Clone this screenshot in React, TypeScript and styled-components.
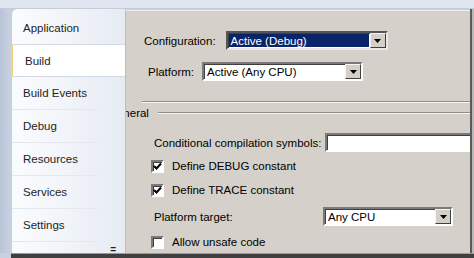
import React from "react";
import styled, { createGlobalStyle } from "styled-components";

const GlobalStyle = createGlobalStyle`
  html, body {
    margin: 0;
    padding: 0;
    background: #c8d1e0;
  }
`;

const tabs = [
  "Application",
  "Build",
  "Build Events",
  "Debug",
  "Resources",
  "Services",
  "Settings",
];

const DropArrow = () => (
  <svg width="7" height="4" viewBox="0 0 7 4">
    <path d="M0 0h7L3.5 4z" fill="#000" />
  </svg>
);

const Combo: React.FC<{ value: string; width: number; selected?: boolean }> = ({
  value,
  width,
  selected,
}) => (
  <ComboBox $focused={selected} style={{ width }}>
    <ComboText $selected={selected}>{value}</ComboText>
    <ComboButton>
      <DropArrow />
    </ComboButton>
  </ComboBox>
);

const Check: React.FC<{ checked?: boolean; label: string }> = ({ checked, label }) => (
  <CheckRow>
    <CheckBox>
      {checked && (
        <svg width="9" height="9" viewBox="0 0 9 9">
          <path d="M1 4l2.5 2.5L8 1.5" stroke="#000" strokeWidth="2" fill="none" />
        </svg>
      )}
    </CheckBox>
    <Label>{label}</Label>
  </CheckRow>
);

export default function App() {
  return (
    <>
      <GlobalStyle />
      <Frame>
        <TopBand />
        <Body>
          <LeftGutter />
          <Sidebar>
            {tabs.map((t) => (
              <Tab key={t} $active={t === "Build"}>
                {t}
              </Tab>
            ))}
            <Grip>=</Grip>
          </Sidebar>
          <Content>
            <ConfigRow>
              <Label>Configuration:</Label>
              <Combo value="Active (Debug)" width={162} selected />
            </ConfigRow>
            <PlatformRow>
              <Label>Platform:</Label>
              <Combo value="Active (Any CPU)" width={161} />
            </PlatformRow>
            <Groove />
            <SectionHeader>
              <SectionTitle>General</SectionTitle>
              <SectionLine />
            </SectionHeader>
            <FieldRow>
              <Label>Conditional compilation symbols:</Label>
              <TextBox />
            </FieldRow>
            <Check checked label="Define DEBUG constant" />
            <Check checked label="Define TRACE constant" />
            <TargetRow>
              <Label>Platform target:</Label>
              <Combo value="Any CPU" width={130} />
            </TargetRow>
            <Check label="Allow unsafe code" />
          </Content>
          <RightGutter />
        </Body>
        <BottomBar />
      </Frame>
    </>
  );
}

const Frame = styled.div`
  width: 474px;
  height: 258px;
  display: flex;
  flex-direction: column;
  overflow: hidden;
  background: #c8d1e0;
  font-family: "Liberation Sans", Arial, sans-serif;
  font-size: 11.5px;
  color: #000;
`;

const TopBand = styled.div`
  height: 8px;
  flex: none;
  background: #dfe5ef;
  border-bottom: 1px solid #c4ccd9;
`;

const Body = styled.div`
  flex: 1;
  display: flex;
  min-height: 0;
`;

const LeftGutter = styled.div`
  width: 11px;
  flex: none;
  background: linear-gradient(to right, #b7c3d7, #c9d2e1);
`;

const Sidebar = styled.div`
  width: 113px;
  flex: none;
  position: relative;
  padding-top: 3px;
  border-top-left-radius: 6px;
  border-left: 1px solid #c6cdd8;
  background: linear-gradient(to right, #fbfcfe, #e6ebf3);
  display: flex;
  flex-direction: column;
`;

const Tab = styled.div<{ $active?: boolean }>`
  height: 33px;
  flex: none;
  display: flex;
  align-items: center;
  padding-left: 11px;
  box-sizing: border-box;
  color: #1e1e1e;
  font-size: 11.5px;
  border-bottom: 1px solid #e3e7ee;
  margin-right: 28px;
  ${(p) =>
    p.$active &&
    `
    background: #ffffff;
    margin-right: 0;
    margin-left: -1px;
    padding-left: 12px;
    border-left: 2px solid #f2d27a;
    border-top: 1px solid #d3d9e2;
    border-bottom: 1px solid #d3d9e2;
    margin-top: -1px;
  `}
`;

const Grip = styled.div`
  position: absolute;
  right: 9px;
  bottom: -1px;
  font-size: 10px;
  font-weight: bold;
  line-height: 8px;
  color: #222;
`;

const Content = styled.div`
  flex: 1;
  margin-top: 1px;
  background: #d5d1ca;
  border-left: 1px solid #b8bcc4;
  border-top: 1px solid #eeeeee;
  overflow: hidden;
  display: flex;
  flex-direction: column;
  & > * {
    flex: none;
  }
`;

const RightGutter = styled.div`
  width: 4px;
  flex: none;
  background: linear-gradient(to right, #5a5a5a 0 2px, #b9b9b9 2px);
`;

const BottomBar = styled.div`
  height: 5px;
  flex: none;
  margin-left: 11px;
  background: linear-gradient(#9a9a9a 0 1px, #3f3f3f 1px);
`;

const Label = styled.span`
  white-space: nowrap;
`;

const ConfigRow = styled.div`
  display: flex;
  align-items: center;
  margin-top: 20px;
  padding-left: 18px;
  gap: 10px;
`;

const PlatformRow = styled(ConfigRow)`
  margin-top: 12px;
  padding-left: 22px;
  gap: 8px;
`;

const ComboBox = styled.div<{ $focused?: boolean }>`
  height: 19px;
  box-sizing: border-box;
  display: flex;
  align-items: stretch;
  background: #fff;
  border: 2px solid;
  border-color: ${(p) =>
    p.$focused ? "#555 #e8e8e8 #e8e8e8 #555" : "#7a7a7a #fff #fff #7a7a7a"};
  box-shadow: inset 1px 1px 0 #404040;
`;

const ComboText = styled.div<{ $selected?: boolean }>`
  flex: 1;
  display: flex;
  align-items: center;
  padding-left: 2px;
  margin: 1px;
  background: ${(p) => (p.$selected ? "#0a246a" : "#fff")};
  color: ${(p) => (p.$selected ? "#fff" : "#000")};
  white-space: nowrap;
`;

const ComboButton = styled.div`
  width: 14px;
  flex: none;
  display: flex;
  align-items: center;
  justify-content: center;
  background: #d4d0c8;
  border: 1px solid;
  border-color: #f4f4f4 #404040 #404040 #f4f4f4;
`;

const Groove = styled.div`
  margin-top: 20px;
  margin-left: 16px;
  height: 0;
  border-top: 1px solid #8f8d88;
  border-bottom: 1px solid #f6f5f2;
`;

const SectionHeader = styled.div`
  display: flex;
  align-items: center;
  margin-top: 2px;
  margin-left: -18px;
  gap: 9px;
  height: 16px;
`;

const SectionTitle = styled.span`
  white-space: nowrap;
`;

const SectionLine = styled(Groove)`
  flex: 1;
  margin: 0;
`;

const FieldRow = styled.div`
  display: flex;
  align-items: center;
  margin-top: 12px;
  padding-left: 28px;
  gap: 4px;
`;

const TextBox = styled.div`
  width: 150px;
  height: 19px;
  flex: none;
  box-sizing: border-box;
  background: #fff;
  border: 2px solid;
  border-color: #7a7a7a #fff #fff #7a7a7a;
  box-shadow: inset 1px 1px 0 #404040;
`;

const CheckRow = styled.div`
  display: flex;
  align-items: center;
  gap: 8px;
  padding-left: 25px;
  height: 24px;
  margin-top: 2px;
  & + & {
    margin-top: 0;
  }
`;

const CheckBox = styled.div`
  width: 13px;
  height: 13px;
  box-sizing: border-box;
  background: #fff;
  border: 2px solid;
  border-color: #7a7a7a #fff #fff #7a7a7a;
  box-shadow: inset 1px 1px 0 #404040;
  display: flex;
  align-items: center;
  justify-content: center;
`;

const TargetRow = styled.div`
  display: flex;
  align-items: center;
  padding-left: 28px;
  margin-top: 5px;
  height: 19px;
  justify-content: space-between;
  padding-right: 17px;
  margin-bottom: 2px;
`;
